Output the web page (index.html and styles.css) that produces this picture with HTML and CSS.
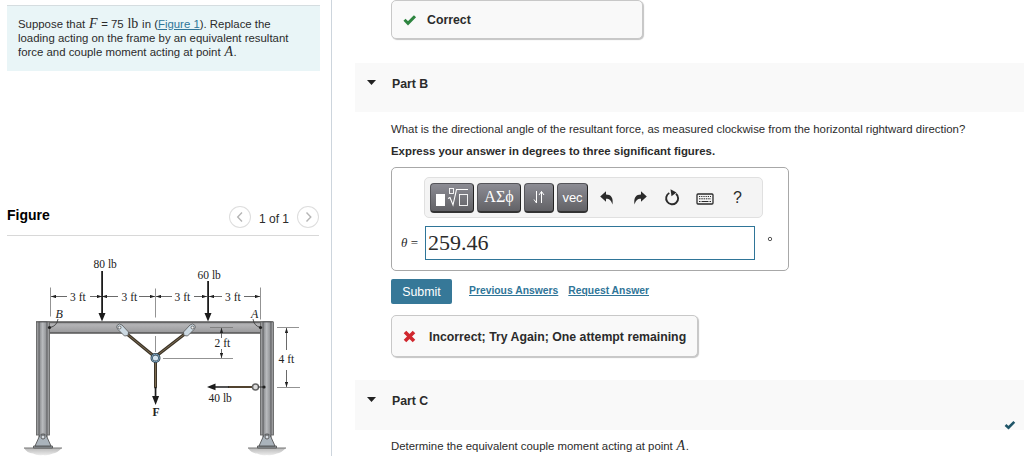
FILE: index.html
```html
<!DOCTYPE html>
<html lang="en">
<head>
    <meta charset="UTF-8">
    <meta name="viewport" content="width=device-width, initial-scale=1.0">
    <title>Equivalent Resultant Force</title>
    <link rel="stylesheet" href="styles.css">
</head>
<body>
    <aside class="side">
        <div class="problem">
            <p>Suppose that <i class="math">F</i> = 75 <span class="math">lb</span> in (<a href="#">Figure 1</a>). Replace the</p>
            <p>loading acting on the frame by an equivalent resultant</p>
            <p>force and couple moment acting at point <i class="math">A</i>.</p>
        </div>

        <div class="figure-header">
            <h2>Figure</h2>
            <div class="pager">
                <button class="round"><svg width="22" height="22" viewBox="0 0 22 22"><path d="M13 6.5 8.7 11l4.3 4.5"/></svg></button>
                <span>1 of 1</span>
                <button class="round"><svg width="22" height="22" viewBox="0 0 22 22"><path d="M9.5 6.5 13.8 11l-4.3 4.5"/></svg></button>
            </div>
        </div>

        <svg class="frame" width="331" height="206" viewBox="0 250 331 206">
            <defs>
                <linearGradient id="beam" x1="0" y1="0" x2="0" y2="1">
                    <stop offset="0" stop-color="#8b8b8d"/>
                    <stop offset="0.25" stop-color="#b4b4b6"/>
                    <stop offset="1" stop-color="#98989a"/>
                </linearGradient>
                <linearGradient id="post" x1="0" y1="0" x2="1" y2="0">
                    <stop offset="0" stop-color="#85878a"/>
                    <stop offset="0.45" stop-color="#b9bbbe"/>
                    <stop offset="1" stop-color="#898b8e"/>
                </linearGradient>
                <linearGradient id="ground" x1="0" y1="0" x2="0" y2="1">
                    <stop offset="0" stop-color="#b8b8b8"/>
                    <stop offset="1" stop-color="#ececec"/>
                </linearGradient>
                <marker id="tip" viewBox="0 0 6 4" refX="6" refY="2" markerWidth="5" markerHeight="3.4" markerUnits="userSpaceOnUse" orient="auto-start-reverse">
                    <path d="M0 0 6 2 0 4z" fill="#222"/>
                </marker>
                <g id="support">
                    <path d="M-19 13.5h38q-5 5-9 5.5-5 2.5-10 1.5-6 1-10-1.5-6-.5-9-5.5z" fill="url(#ground)"/>
                    <path d="M-19 13.5h38" stroke="#777"/>
                    <path d="M-9.5 11.5h19v2h-19z" fill="#9aa0a5" stroke="#444" stroke-width=".7"/>
                    <path d="M-8 11.5-3.5 1.5a4 4 0 0 1 7 0L8 11.5z" fill="#aab3bb" stroke="#444" stroke-width=".8"/>
                    <circle cy="2.5" r="2" fill="#d8dee3" stroke="#444" stroke-width=".8"/>
                </g>
            </defs>

            <!-- beam -->
            <rect x="49" y="322" width="212" height="11" fill="url(#beam)"/>
            <path d="M36 322h237" stroke="#555" stroke-width="1.3"/>
            <path d="M49 333h212" stroke="#555" stroke-width="1.3"/>

            <!-- posts -->
            <rect x="36.5" y="322" width="13" height="113" fill="#9a9b9d" stroke="#666" stroke-width=".9"/>
            <rect x="39" y="322" width="8" height="115" fill="url(#post)" stroke="#505254" stroke-width=".8"/>
            <rect x="260.5" y="322" width="13" height="113" fill="#9a9b9d" stroke="#666" stroke-width=".9"/>
            <rect x="263" y="322" width="8" height="115" fill="url(#post)" stroke="#505254" stroke-width=".8"/>
            <use href="#support" x="43" y="434.5"/>
            <use href="#support" x="267" y="434.5"/>

            <!-- extension lines -->
            <path class="thin" d="M50.5 287.5v29M155.5 288.5v29M155.5 336v16M260.5 287.5v32M210 327.5h23M163 358.5h70M277 327.5h22M277 387.5h23"/>

            <!-- dimensions -->
            <path class="dim" marker-start="url(#tip)" d="M51 296.5H67"/>
            <path class="dim" marker-end="url(#tip)" d="M90 296.5h12"/>
            <path class="dim" marker-start="url(#tip)" d="M102 296.5h16"/>
            <path class="dim" marker-end="url(#tip)" d="M139 296.5h16"/>
            <path class="dim" marker-start="url(#tip)" d="M156 296.5h16"/>
            <path class="dim" marker-end="url(#tip)" d="M194 296.5h13"/>
            <path class="dim" marker-start="url(#tip)" d="M209 296.5h13"/>
            <path class="dim" marker-end="url(#tip)" d="M244 296.5h16"/>
            <path class="dim" marker-start="url(#tip)" d="M221.5 328v10"/>
            <path class="dim" marker-end="url(#tip)" d="M221.5 349v9"/>
            <path class="dim" marker-start="url(#tip)" d="M286.5 328v22"/>
            <path class="dim" marker-end="url(#tip)" d="M286.5 370v17"/>

            <!-- ropes -->
            <g fill="none" stroke-linecap="round">
                <path d="M127 334 155 357 186 333M155.5 361v26" stroke="#3c3428" stroke-width="3"/>
                <path d="M127 334 155 357 186 333M155.5 361v26" stroke="#7d6c50" stroke-width="1"/>
                <path d="M229 387h25" stroke="#51432f" stroke-width="2.2"/>
            </g>
            <path d="M117 325.5a3.5 3.5 0 0 1 5-.5l6.5 7-.5 3.5-3.5.5-6.5-6.5a3.5 3.5 0 0 1-1-4z" fill="#ccd9e2" stroke="#555" stroke-width=".8"/>
            <circle cx="119.5" cy="327.5" r="1.5" fill="#eee" stroke="#555" stroke-width=".8"/>
            <path d="M195 325.5a3.5 3.5 0 0 0-5-.5l-6.5 7 .5 3.5 3.5.5 6.5-6.5a3.5 3.5 0 0 0 1-4z" fill="#ccd9e2" stroke="#555" stroke-width=".8"/>
            <circle cx="192.5" cy="327.5" r="1.5" fill="#eee" stroke="#555" stroke-width=".8"/>
            <circle cx="155.5" cy="358" r="3.8" fill="#d5e5f0" stroke="#33444f" stroke-width="2.4"/>
            <circle cx="155.5" cy="358" r="3.8" fill="none" stroke="#7ba3bf" stroke-width="1"/>
            <circle cx="255.5" cy="387" r="3" fill="#ddd" stroke="#666" stroke-width="1.5"/>
            <path d="M258 387h6" stroke="#333"/>
            <circle cx="264" cy="387" r="1.6" fill="#222"/>

            <!-- forces -->
            <g fill="#1c1c1c">
                <path d="M101.2 271h1.8v42h2.5L102 321.5 98.5 313h2.7z"/>
                <path d="M207.2 281h1.8v32h2.5L208 321.5 204.5 313h2.7z"/>
                <path d="M154.7 387h1.7v9h2.7l-3.5 9-3.5-9h2.6z"/>
                <path d="M229 386.2h-13.5v-2.7L207 387l8.5 3.3v-2.5H229z"/>
            </g>

            <!-- joint pointers -->
            <path d="M58 319q-1 7-8 8.5M253 319q1 7 7.5 8.5" fill="none" stroke="#333" stroke-width=".8"/>
            <circle cx="49.5" cy="327.5" r="1.6" fill="#222"/>
            <circle cx="260.5" cy="327.5" r="1.6" fill="#222"/>

            <g class="labels">
                <text x="93.5" y="268">80 lb</text>
                <text x="197.5" y="278.5">60 lb</text>
                <text x="70" y="300.5">3 ft</text>
                <text x="121.5" y="300.5">3 ft</text>
                <text x="174.5" y="300.5">3 ft</text>
                <text x="225" y="300.5">3 ft</text>
                <text x="214.5" y="347">2 ft</text>
                <text x="278.5" y="362.5">4 ft</text>
                <text x="208.5" y="401.5">40 lb</text>
                <text x="55.5" y="318" class="it">B</text>
                <text x="251" y="318" class="it">A</text>
                <text x="152.5" y="416" class="bold">F</text>
            </g>
        </svg>
    </aside>

    <main>
        <div class="feedback correct">
            <svg width="14" height="12" viewBox="0 0 14 12"><path d="M1.500 5.800 5 9.300 12 2.200" fill="none" stroke="#2e8540" stroke-width="3"/></svg>
            <strong>Correct</strong>
        </div>

        <header class="part part-b">
            <i class="caret"></i>
            <h3>Part B</h3>
        </header>

        <section class="question">
            <p class="ask">What is the directional angle of the resultant force, as measured clockwise from the horizontal rightward direction?</p>
            <p class="express">Express your answer in degrees to three significant figures.</p>

            <div class="answer">
                <div class="toolbar">
                    <button class="tool wide">
                        <svg width="36" height="22" viewBox="0 0 36 22" fill="none" stroke="#fff">
                            <rect x="2.5" y="8.5" width="8" height="11" fill="#fff"/>
                            <path d="M14 12.5l2-1 3 7.5 3.5-15.5H34" stroke-width="1.1"/>
                            <rect x="15.5" y="2.5" width="4" height="5" stroke-width=".9"/>
                            <rect x="25.5" y="8.5" width="8" height="11" stroke-width=".9"/>
                        </svg>
                    </button>
                    <button class="tool wide greek">ΑΣϕ</button>
                    <button class="tool narrow">
                        <svg width="14" height="14" viewBox="0 0 14 14" fill="none" stroke="#fff"><path d="M4.5 1v12L2 9.5M9.5 13V1.5M7 5 9.5 1.5 12 5"/></svg>
                    </button>
                    <button class="tool vec">vec</button>
                    <button class="icon undo"><svg width="14" height="14" viewBox="0 0 14 14"><path d="M.2 5.5 6 .3v3.2c5 0 7.5 3 6.5 10C11.2 9.5 9.8 7.7 6 7.7v3z"/></svg></button>
                    <button class="icon redo"><svg width="14" height="14" viewBox="0 0 14 14"><path d="M13.8 5.5 8 .3v3.2c-5 0-7.5 3-6.5 10C2.8 9.5 4.2 7.7 8 7.7v3z"/></svg></button>
                    <button class="icon reset"><svg width="16" height="17" viewBox="0 0 16 17"><path d="M12 4.7A6 6 0 1 1 5.3 4" fill="none" stroke="#2b2b2b" stroke-width="1.9"/><path d="M6.5.3 12.5 3.5 7.5 7.3z"/></svg></button>
                    <button class="icon keys">
                        <svg width="18" height="12" viewBox="0 0 18 12" fill="none" stroke="#2b2b2b">
                            <rect x="1" y="1" width="16" height="10" rx="1" stroke-width="1.3"/>
                            <path d="M3 3.5h12" stroke-dasharray="1.2 1"/>
                            <path d="M3 5.8h12" stroke-dasharray="1.5 .8"/>
                            <path d="M3 8.5h1.5M5.5 8.5h7M13.5 8.5H15"/>
                        </svg>
                    </button>
                    <button class="icon help">?</button>
                </div>
                <div class="entry">
                    <label for="theta"><i>θ</i> =</label>
                    <input id="theta" type="text" value="259.46">
                    <svg class="degree" width="6" height="6" viewBox="0 0 6 6"><circle cx="3" cy="3" r="1.7" fill="none" stroke="#444" stroke-width=".9"/></svg>
                </div>
            </div>

            <div class="actions">
                <button class="submit">Submit</button>
                <a href="#" class="prev">Previous Answers</a>
                <a href="#" class="req">Request Answer</a>
            </div>
        </section>

        <div class="feedback incorrect">
            <svg width="13" height="13" viewBox="0 0 13 13"><path d="M2 2l9 9M11 2l-9 9" stroke="#d0282e" stroke-width="3.6"/></svg>
            <strong>Incorrect; Try Again; One attempt remaining</strong>
        </div>

        <header class="part part-c">
            <i class="caret"></i>
            <h3>Part C</h3>
            <svg class="done" width="12" height="10" viewBox="0 0 12 10"><path d="M1.5 5 4.5 7.7 10.3 1.8" fill="none" stroke="#1f5568" stroke-width="2.6"/></svg>
        </header>

        <p class="next">Determine the equivalent couple moment acting at point <i class="math">A</i>.</p>
    </main>
</body>
</html>
```

FILE: styles.css
```css
* {
    margin: 0;
    padding: 0;
    box-sizing: border-box;
}

body {
    display: flex;
    height: 456px;
    overflow: hidden;
    background: #fff;
    color: #2b2b2b;
    font-family: "Liberation Sans", Arial, sans-serif;
    font-size: 12px;
}

button {
    border: none;
    background: none;
    font-family: inherit;
    cursor: pointer;
}

a {
    color: #2f7598;
}

svg {
    display: block;
    flex: none;
}

/* left column */
.side {
    flex: none;
    width: 332px;
    border-right: 1px solid #cdd5dd;
}

.problem {
    width: 313px;
    height: 66px;
    margin: 5px 0 0 7px;
    padding: 11px 0 0 11px;
    border-top: 1px solid #d5dde0;
    background: #e9f5f7;
    white-space: nowrap;
}

.problem p {
    height: 14px;
    font-size: 11.4px;
    line-height: 14px;
}

.math {
    margin: 0 0.6px;
    font-family: "Liberation Serif", "Times New Roman", serif;
    font-size: 14px;
    line-height: 1;
}

.figure-header {
    display: flex;
    justify-content: space-between;
    width: 312px;
    height: 32px;
    margin: 133px 0 0 7px;
    border-bottom: 1px solid #d8d8d8;
}

.figure-header h2 {
    margin-top: 3px;
    color: #000;
    font-size: 14px;
    line-height: 16px;
}

.pager {
    display: flex;
    margin-top: 2px;
}

.pager span {
    width: 46px;
    padding-top: 5px;
    text-align: center;
    line-height: 16px;
}

.round {
    width: 22px;
    height: 22px;
    border-radius: 50%;
    box-shadow: inset 0 0 0 1px #dedede;
}

.round path {
    fill: none;
    stroke: #b5b5b5;
    stroke-width: 1.4;
}

.frame {
    margin-top: 14px;
}

.thin {
    fill: none;
    stroke: #777;
    stroke-width: 0.8;
}

.dim {
    fill: none;
    stroke: #444;
    stroke-width: 0.8;
}

.labels {
    fill: #222;
    font-family: "Liberation Serif", "Times New Roman", serif;
    font-size: 11.5px;
}

.it {
    font-size: 12px;
    font-style: italic;
}

.bold {
    font-weight: bold;
}

/* right column */
main {
    flex: 1;
    padding-left: 23px;
}

.feedback {
    display: flex;
    align-items: center;
    margin-left: 36px;
    border: 1px solid #c8c8c8;
    border-radius: 5px;
    background: #f9f9f9;
    box-shadow: 1px 1px 1px #c4c4c4;
    font-size: 12.3px;
}

.feedback svg {
    margin-left: 11px;
}

.correct {
    width: 252px;
    height: 39px;
}

.correct strong {
    margin-left: 10px;
}

.part {
    display: flex;
    background: #f9f9f9;
}

.part h3 {
    margin-left: 16px;
    font-size: 12.3px;
    line-height: 14px;
}

.part-b {
    height: 49px;
    margin-top: 24px;
    padding: 14px 0 0 12px;
}

.caret {
    margin-top: 3px;
    width: 9px;
    height: 5px;
    background: #222;
    clip-path: polygon(0 0, 100% 0, 50% 100%);
}

.question {
    padding: 10px 0 0 36px;
}

.ask,
.express,
.next {
    font-size: 11.4px;
    line-height: 14px;
    white-space: nowrap;
}

.express {
    margin-top: 8px;
    font-weight: bold;
}

.answer {
    width: 398px;
    height: 104px;
    margin-top: 9px;
    padding: 9px 0 0 9px;
    border: 1px solid #a8a8a8;
    border-radius: 5px;
}

.toolbar {
    display: flex;
    align-items: center;
    width: 339px;
    height: 41px;
    margin-left: 23px;
    padding-left: 5px;
    border: 1px solid #e0e0e0;
    border-radius: 5px;
    background: #f4f4f4;
}

.tool {
    display: flex;
    align-items: center;
    justify-content: center;
    flex: none;
    height: 30px;
    margin-right: 3px;
    border: 1px solid #55555a;
    border-right-color: #222;
    border-bottom: 2px solid #333;
    border-radius: 4px;
    background: linear-gradient(#8c8c94, #626266);
    color: #fff;
}

.wide {
    width: 44px;
}

.greek {
    font-family: "Liberation Serif", "Times New Roman", serif;
    font-size: 16px;
}

.narrow {
    width: 30px;
}

.vec {
    width: 31px;
    font-size: 13px;
}

.icon {
    flex: none;
    fill: #2b2b2b;
}

.undo {
    margin-left: 9px;
}

.redo {
    margin-left: 19px;
}

.reset {
    margin-left: 17px;
}

.keys {
    margin: 3px 0 0 16px;
}

.help {
    margin-left: 19px;
    color: #2b2b2b;
    font-size: 16px;
}

.entry {
    display: flex;
    margin-top: 8px;
}

.entry label {
    width: 24px;
    font-family: "Liberation Serif", "Times New Roman", serif;
    font-size: 13px;
    line-height: 33px;
    white-space: nowrap;
}

.entry input {
    width: 330px;
    height: 34px;
    padding-left: 2px;
    border: 1px solid #2f7598;
    color: #2b2b2b;
    font-family: "Liberation Serif", "Times New Roman", serif;
    font-size: 22px;
}

.degree {
    margin: 10px 0 0 12px;
}

.actions {
    display: flex;
    margin-top: 8px;
}

.submit {
    width: 61px;
    height: 25px;
    border-radius: 2px;
    background: #367898;
    color: #fff;
    font-size: 12.4px;
}

.actions a {
    font-size: 10.35px;
    font-weight: bold;
    line-height: 24px;
    white-space: nowrap;
}

.prev {
    margin-left: 17px;
}

.req {
    margin-left: 10px;
}

.incorrect {
    width: 307px;
    height: 42px;
    margin-top: 11px;
    white-space: nowrap;
}

.incorrect strong {
    margin: 1px 0 0 13px;
}

.part-c {
    height: 50px;
    margin-top: 23px;
    padding: 14px 0 0 12px;
}

.done {
    margin: 26px 8px 0 auto;
}

.next {
    margin: 9px 0 0 36px;
}
```
